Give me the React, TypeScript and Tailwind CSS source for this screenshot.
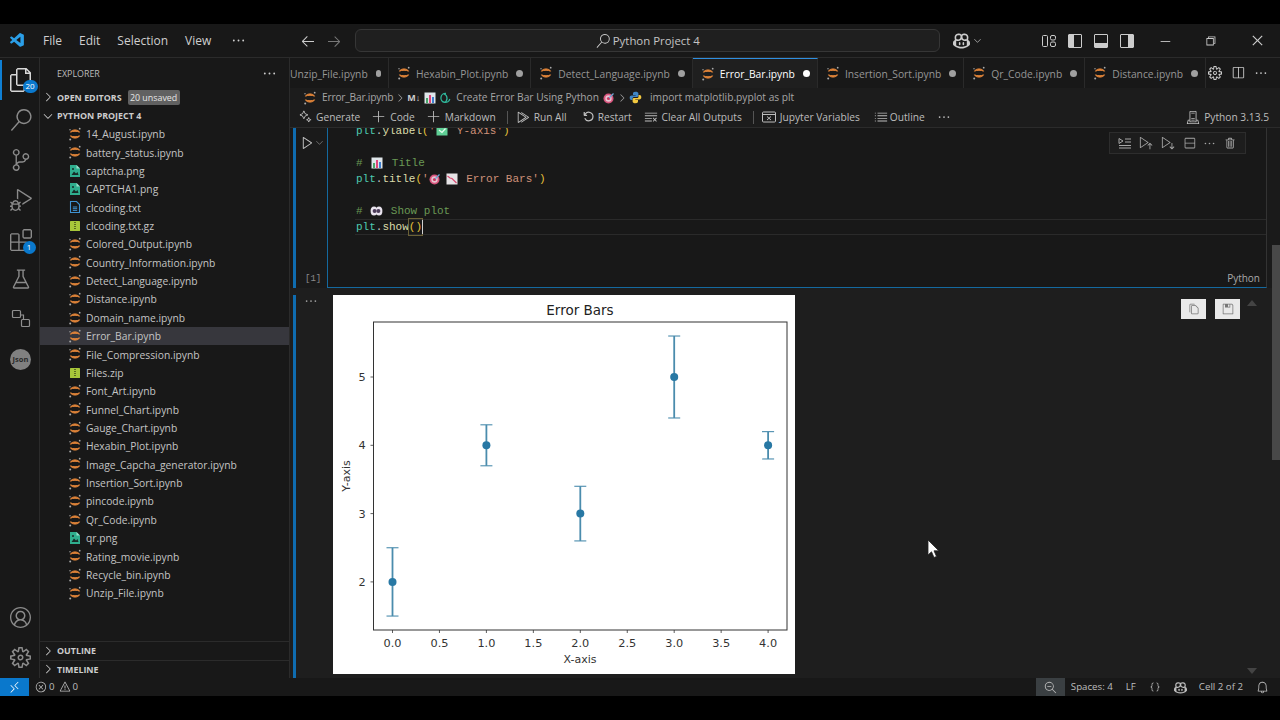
import type { ReactNode } from "react";
import {
  VscAccount, VscAdd, VscArrowLeft, VscArrowRight, VscBeaker, VscBell, VscChevronDown, VscChevronRight,
  VscChromeClose, VscChromeMinimize, VscChromeRestore, VscClearAll, VscCopilot, VscCopy, VscDebugAlt,
  VscDebugRestart, VscEllipsis, VscError, VscExtensions, VscFiles, VscJson, VscLayoutPanel, VscLayoutSidebarLeft,
  VscLayoutSidebarRight, VscListUnordered, VscPlay, VscRemote, VscRunAbove, VscRunAll, VscRunBelow,
  VscSave, VscSearch, VscServerEnvironment, VscSettingsGear, VscSourceControl, VscSparkle, VscSplitHorizontal,
  VscSplitVertical, VscTrash, VscVscode, VscWarning, VscZoomOut,
} from "react-icons/vsc";

const ui = "font-['Open_Sans',sans-serif]";

const NotebookIcon = ({ size = 14 }: { size?: number }) => (
  <svg width={size} height={size} viewBox="0 0 14 14" className="shrink-0">
    <path d="M2.5 5.2C3.8 2.2 10.2 2.2 11.5 5.2C9.5 3.9 4.5 3.9 2.5 5.2Z" fill="#e8883a" stroke="#e8883a" />
    <path d="M2.5 8.8C3.8 11.8 10.2 11.8 11.5 8.8C9.5 10.1 4.5 10.1 2.5 8.8Z" fill="#e8883a" stroke="#e8883a" />
    <circle cx="11.7" cy="1.7" r="0.9" fill="#a9a9a9" />
    <circle cx="2" cy="2.8" r="0.7" fill="#a9a9a9" />
    <circle cx="2.2" cy="12.4" r="1" fill="#a9a9a9" />
  </svg>
);

const PngIcon = () => (
  <svg width={14} height={14} viewBox="0 0 14 14" className="shrink-0">
    <path d="M2 1H8.5L12 4.5V13H2Z" fill="#2fae8e" />
    <path d="M8.5 1V4.5H12Z" fill="#9adfca" />
    <path d="M3.5 11L6 7.5L8 9.5L9.5 8L10.5 11Z" fill="#172b27" />
    <circle cx="5" cy="5" r="1" fill="#172b27" />
  </svg>
);

const TxtIcon = () => (
  <svg width={14} height={14} viewBox="0 0 14 14" className="shrink-0" fill="none">
    <path d="M2.5 1.5H8.5L11.5 4.5V12.5H2.5Z" stroke="#3f92d2" strokeWidth="1.1" />
    <path d="M4.8 7H9.2M4.8 8.7H9.2M4.8 10.4H9.2" stroke="#3f92d2" />
  </svg>
);

const ZipIcon = () => (
  <svg width={14} height={14} viewBox="0 0 14 14" className="shrink-0">
    <rect x="2" y="2" width="10" height="10" rx="0.6" fill="#a8c73a" />
    <path d="M7 3V4M7 5V6M7 7V8M7 9V10" stroke="#2a3010" strokeWidth="1.2" />
  </svg>
);

const ChartEmoji = () => (
  <svg width={12} height={12} viewBox="0 0 12 12" className="shrink-0">
    <rect x="0.5" y="0.5" width="11" height="11" fill="#dfe6ea" />
    <rect x="2" y="6" width="2" height="5" fill="#4aa56a" />
    <rect x="5" y="3" width="2" height="8" fill="#e0457b" />
    <rect x="8" y="5" width="2" height="6" fill="#3f7fd0" />
  </svg>
);

const TargetEmoji = () => (
  <svg width={12} height={12} viewBox="0 0 12 12" className="shrink-0">
    <circle cx="5.5" cy="6.5" r="5" fill="#d9557e" />
    <circle cx="5.5" cy="6.5" r="3.2" fill="#e8c3cf" />
    <circle cx="5.5" cy="6.5" r="1.6" fill="#c8365f" />
    <path d="M6 6L10.5 1.5" stroke="#6fa7d6" strokeWidth="1.2" />
  </svg>
);

const TrendEmoji = () => (
  <svg width={12} height={12} viewBox="0 0 12 12" className="shrink-0">
    <rect x="0.5" y="0.5" width="11" height="11" fill="#e6e3e6" />
    <path d="M1.5 3L4 5L6 5.5L10.5 10" stroke="#d8486f" strokeWidth="1.2" fill="none" />
  </svg>
);

const EyesEmoji = () => (
  <svg width={13} height={12} viewBox="0 0 13 12" className="shrink-0">
    <ellipse cx="4" cy="6" rx="3.4" ry="4.6" fill="#e9e3ee" />
    <ellipse cx="9" cy="6" rx="3.4" ry="4.6" fill="#e9e3ee" />
    <circle cx="4.6" cy="6" r="2" fill="#4c3c5a" />
    <circle cx="8.4" cy="6" r="2" fill="#4c3c5a" />
  </svg>
);

const CheckEmoji = () => (
  <svg width={12} height={12} viewBox="0 0 12 12" className="shrink-0">
    <rect x="0.5" y="1.5" width="11" height="9" fill="#5fcf95" />
    <path d="M3 5L6 7.5L9.5 3.5" stroke="#e8fff2" strokeWidth="1.2" fill="none" />
  </svg>
);

const SwirlIcon = () => (
  <svg width={12} height={12} viewBox="0 0 12 12" className="shrink-0" fill="none">
    <path d="M7 1.5A4.5 4.5 0 1 0 10.8 7M5 10.5A4.5 4.5 0 0 0 5 2" stroke="#2fb59a" strokeWidth="1.3" />
  </svg>
);

const PythonIcon = () => (
  <svg width={13} height={13} viewBox="0 0 13 13" className="shrink-0">
    <path d="M6.5 0.8C4 0.8 4 1.8 4 3V4H6.7V4.6H2.7C1.4 4.6 0.7 5.4 0.7 6.8C0.7 8.2 1.4 9 2.5 9H3.5V7.6C3.5 6.6 4.3 6 5.2 6H8C8.8 6 9.4 5.4 9.4 4.6V2.6C9.4 1.4 8.2 0.8 6.5 0.8Z" fill="#3f86c6" />
    <path d="M6.5 12.2C9 12.2 9 11.2 9 10V9H6.3V8.4H10.3C11.6 8.4 12.3 7.6 12.3 6.2C12.3 4.8 11.6 4 10.5 4H9.5V5.4C9.5 6.4 8.7 7 7.8 7H5C4.2 7 3.6 7.6 3.6 8.4V10.4C3.6 11.6 4.8 12.2 6.5 12.2Z" fill="#f2c83f" />
  </svg>
);

const PipelineIcon = () => (
  <svg width={22} height={22} viewBox="0 0 22 22" fill="none" stroke="#8f8f8f" strokeWidth="1.2">
    <rect x="2.5" y="2.5" width="8" height="7" rx="1" />
    <rect x="11.5" y="11.5" width="8" height="7" rx="1" />
    <path d="M10.5 7H13.5V11.5" />
  </svg>
);

const LayoutIcon = () => (
  <svg width={16} height={16} viewBox="0 0 16 16" fill="none" stroke="#cccccc" strokeWidth="1">
    <rect x="1.5" y="2.5" width="5" height="11" rx="1" />
    <rect x="9.5" y="2.5" width="5" height="4.5" rx="1.5" />
    <rect x="9.5" y="9" width="5" height="4.5" rx="1.5" />
  </svg>
);

const VariablesIcon = () => (
  <svg width={14} height={14} viewBox="0 0 14 14" fill="none" stroke="#bdbdbd">
    <rect x="0.5" y="2" width="13" height="10" rx="1" />
    <path d="M0.5 4.5H13.5" />
    <path d="M5 6.5L9 10M9 6.5L5 10" />
  </svg>
);

const ExecuteIcon = () => (
  <svg width={14} height={14} viewBox="0 0 14 14" fill="none" stroke="#a8a8a8">
    <path d="M1 2.5L5 5L1 7.5Z" />
    <path d="M7 3H13M7 6H13M1 9.5H13M1 12H13" />
  </svg>
);

const files: [string, "nb" | "png" | "txt" | "zip"][] = [
  ["14_August.ipynb", "nb"], ["battery_status.ipynb", "nb"], ["captcha.png", "png"], ["CAPTCHA1.png", "png"],
  ["clcoding.txt", "txt"], ["clcoding.txt.gz", "zip"], ["Colored_Output.ipynb", "nb"], ["Country_Information.ipynb", "nb"],
  ["Detect_Language.ipynb", "nb"], ["Distance.ipynb", "nb"], ["Domain_name.ipynb", "nb"], ["Error_Bar.ipynb", "nb"],
  ["File_Compression.ipynb", "nb"], ["Files.zip", "zip"], ["Font_Art.ipynb", "nb"], ["Funnel_Chart.ipynb", "nb"],
  ["Gauge_Chart.ipynb", "nb"], ["Hexabin_Plot.ipynb", "nb"], ["Image_Capcha_generator.ipynb", "nb"], ["Insertion_Sort.ipynb", "nb"],
  ["pincode.ipynb", "nb"], ["Qr_Code.ipynb", "nb"], ["qr.png", "png"], ["Rating_movie.ipynb", "nb"],
  ["Recycle_bin.ipynb", "nb"], ["Unzip_File.ipynb", "nb"],
];

const tabs = ["Hexabin_Plot.ipynb", "Detect_Language.ipynb", "Error_Bar.ipynb", "Insertion_Sort.ipynb", "Qr_Code.ipynb", "Distance.ipynb"];

const Activity = ({ children, active }: { children: ReactNode; active?: boolean }) => (
  <div className={`h-[39.9px] flex items-center justify-center text-[#8b8b8b] border-l-2 ${active ? "border-[#0f7fd4] text-[#d7d7d7]" : "border-transparent"}`}>
    {children}
  </div>
);

const Sidebar = () => (
  <aside className="w-[250px] shrink-0 flex flex-col bg-[#181818] border-r border-[#2b2b2b]">
    <div className="h-[30px] flex items-center justify-between pl-[17px] pr-[12px] text-[8.9px] text-[#bbbbbb]">
      <span className="pt-[2px]">EXPLORER</span>
      <VscEllipsis size={15} className="text-[#cccccc]" />
    </div>
    <div className="h-[18.4px] flex items-center pl-[1px] text-[8.9px] font-bold text-[#cccccc]">
      <VscChevronRight size={14} />
      <span className="ml-[2px]">OPEN EDITORS</span>
      <span className="ml-[6px] h-[15px] w-[52px] bg-[#616161] rounded-[2px] flex items-center justify-center font-normal text-[#e6e6e6] text-[8.9px]">20 unsaved</span>
    </div>
    <div className="h-[18.4px] flex items-center pl-[1px] text-[8.9px] font-bold text-[#cccccc]">
      <VscChevronDown size={14} />
      <span className="ml-[2px]">PYTHON PROJECT 4</span>
    </div>
    <div className="flex-1">
      {files.map(([name, kind]) => (
        <div key={name} className={`h-[18.36px] flex items-center pl-[28px] gap-[4px] text-[10.3px] text-[#c4c4c4] ${name === "Error_Bar.ipynb" ? "bg-[#37373d]" : ""}`}>
          {kind === "nb" && <NotebookIcon />}
          {kind === "png" && <PngIcon />}
          {kind === "txt" && <TxtIcon />}
          {kind === "zip" && <ZipIcon />}
          <span className="pt-[2px]">{name}</span>
        </div>
      ))}
    </div>
    <div className="h-[18.5px] flex items-center pl-[1px] text-[8.9px] font-bold text-[#cccccc] border-t border-[#2b2b2b]">
      <VscChevronRight size={14} />
      <span className="ml-[2px]">OUTLINE</span>
    </div>
    <div className="h-[18.5px] flex items-center pl-[1px] text-[8.9px] font-bold text-[#cccccc] border-t border-[#2b2b2b]">
      <VscChevronRight size={14} />
      <span className="ml-[2px]">TIMELINE</span>
    </div>
  </aside>
);

const TabBar = () => (
  <div className="h-[30px] shrink-0 flex items-stretch bg-[#181818] text-[10.3px] overflow-hidden">
    <div className="w-[99px] shrink-0 flex items-center justify-end gap-[8px] pr-[7px] text-[#969696] border-r border-[#2a2a2a]">
      <span className="pt-[3px]">Unzip_File.ipynb</span>
      <span className="w-[7px] h-[7px] rounded-full bg-[#a0a0a0]" />
    </div>
    {tabs.map((t) => {
      const active = t === "Error_Bar.ipynb";
      return (
        <div key={t} className={`flex items-center pl-[8px] pr-[7px] gap-[5px] border-r border-[#2a2a2a] ${active ? "bg-[#1f1f1f] text-white border-t border-t-[#2f8fe0]" : "text-[#969696]"}`}>
          <NotebookIcon />
          <span className="pt-[3px]">{t}</span>
          <span className={`ml-[3px] w-[7px] h-[7px] rounded-full ${active ? "bg-white" : "bg-[#a0a0a0]"}`} />
        </div>
      );
    })}
    <div className="ml-auto flex items-center gap-[9px] pr-[12px] text-[#cccccc]">
      <VscSettingsGear size={14} />
      <VscSplitHorizontal size={14} />
      <VscEllipsis size={14} />
    </div>
  </div>
);

const Breadcrumbs = () => (
  <div className="h-[19px] shrink-0 flex items-center pl-[13px] text-[10.2px] text-[#a6a6a6] bg-[#1c1c1c]">
    <NotebookIcon />
    <span className="ml-[5px] tracking-[-0.2px]">Error_Bar.ipynb</span>
    <VscChevronRight size={12} className="mx-[1px]" />
    <span className="text-[9px] font-bold text-[#cccccc] mr-[4px]">M↓</span>
    <ChartEmoji />
    <span className="w-[3px]" />
    <SwirlIcon />
    <span className="ml-[5px]">Create Error Bar Using Python</span>
    <span className="w-[4px]" />
    <TargetEmoji />
    <VscChevronRight size={12} className="mx-[1px]" />
    <PythonIcon />
    <span className="ml-[8px]">import matplotlib.pyplot as plt</span>
  </div>
);

const Tool = ({ icon, label, gap = "gap-[4px]" }: { icon: ReactNode; label: string; gap?: string }) => (
  <div className={`flex items-center ${gap}`}>
    {icon}
    <span className="pt-[2px]">{label}</span>
  </div>
);

const Toolbar = () => (
  <div className="h-[21px] shrink-0 flex items-center pl-[9px] pr-[11px] text-[10.2px] text-[#bdbdbd] bg-[#1c1c1c] border-b border-[#2b2b2b]">
    <Tool icon={<VscSparkle size={13} />} label="Generate" />
    <div className="w-[12px]" />
    <Tool icon={<VscAdd size={14} />} label="Code" />
    <div className="w-[12px]" />
    <Tool icon={<VscAdd size={14} />} label="Markdown" />
    <div className="w-px h-[13px] bg-[#555] ml-[11px] mr-[8px]" />
    <Tool icon={<VscRunAll size={14} />} label="Run All" />
    <div className="w-[15px]" />
    <Tool icon={<VscDebugRestart size={13} />} label="Restart" gap="gap-[3px]" />
    <div className="w-[12px]" />
    <Tool icon={<VscClearAll size={14} />} label="Clear All Outputs" />
    <div className="w-px h-[13px] bg-[#555] ml-[11px] mr-[8px]" />
    <Tool icon={<VariablesIcon />} label="Jupyter Variables" />
    <div className="w-[14px]" />
    <Tool icon={<VscListUnordered size={14} />} label="Outline" gap="gap-[2px]" />
    <VscEllipsis size={14} className="ml-[12px]" />
    <div className="ml-auto flex items-center gap-[4px]">
      <VscServerEnvironment size={14} />
      <span className="pt-[2px]">Python 3.13.5</span>
    </div>
  </div>
);

const CodeCell = () => (
  <div className="h-[160px] shrink-0 flex bg-[#1a1a1a]">
    <div className="w-[3px] ml-[3px] shrink-0 bg-[#0f6cb0]" />
    <div className="w-[31px] shrink-0 relative text-[#8a8a8a]">
      <VscPlay size={15} className="absolute left-[4px] top-[7px] text-[#c5c5c5]" />
      <VscChevronDown size={11} className="absolute left-[18px] top-[9px]" />
      <span className="absolute left-[9px] bottom-[2px] font-['Liberation_Mono',monospace] text-[9px]">[1]</span>
    </div>
    <div className="w-[940px] shrink-0 bg-[#181818] border-l border-b border-r border-l-[#14699f] border-b-[#14699f] border-r-[#333] relative overflow-hidden font-['Liberation_Mono',monospace] text-[11px] leading-[16px] pl-[28px] whitespace-pre">
      <div className="-mt-[5px]">
        <div className="h-[16px] flex items-center">
          <span className="text-[#4ec9b0]">plt</span><span className="text-[#c8c8c8]">.</span><span className="text-[#dcdcaa]">ylabel</span><span className="text-[#e5c33b]">(</span><span className="text-[#ce9178]">'</span><span className="ml-[1px]"><CheckEmoji /></span><span className="text-[#ce9178] pl-[2px]"> Y-axis'</span><span className="text-[#e5c33b]">)</span>
        </div>
        <div className="h-[16px]" />
        <div className="h-[16px] flex items-center text-[#6a9955]">
          <span># </span><span className="ml-[2px]"><ChartEmoji /></span><span className="pl-[2px]"> Title</span>
        </div>
        <div className="h-[16px] flex items-center">
          <span className="text-[#4ec9b0]">plt</span><span className="text-[#c8c8c8]">.</span><span className="text-[#dcdcaa]">title</span><span className="text-[#e5c33b]">(</span><span className="text-[#ce9178]">'</span><TargetEmoji /><span className="w-[5px]" /><TrendEmoji /><span className="text-[#ce9178] pl-[2px]"> Error Bars'</span><span className="text-[#e5c33b]">)</span>
        </div>
        <div className="h-[16px]" />
        <div className="h-[16px] flex items-center text-[#6a9955]">
          <span># </span><span className="ml-[1px]"><EyesEmoji /></span><span className="pl-[1px]"> Show plot</span>
        </div>
        <div className="h-[16px] flex items-center border-y border-[#2a2a2a] -ml-px">
          <span className="text-[#4ec9b0] pl-px">plt</span><span className="text-[#c8c8c8]">.</span><span className="text-[#dcdcaa]">show</span><span className="text-[#e5c33b] outline outline-[#6b6136]">()</span><span className="w-px h-[14px] bg-[#d0d0d0]" />
        </div>
      </div>
      <span className="absolute right-[6px] bottom-[1px] text-[10px] text-[#a9a9a9] font-['Open_Sans',sans-serif]">Python</span>
      <div className="absolute left-[781px] top-[4px] w-[137px] h-[22px] flex items-center justify-around px-[4px] bg-[#1d1d1d] border border-[#2d2d2d] text-[#a8a8a8]">
        <ExecuteIcon />
        <VscRunAbove size={14} />
        <VscRunBelow size={14} />
        <VscSplitVertical size={13} />
        <VscEllipsis size={13} />
        <VscTrash size={13} />
      </div>
    </div>
  </div>
);

const pts = [[0, 2, 1.5, 2.5], [1, 4, 3.7, 4.3], [2, 3, 2.6, 3.4], [3, 5, 4.4, 5.6], [4, 4, 3.8, 4.2]];
const px = (v: number) => 59.5 + v * 93.9;
const py = (v: number) => 82 + (5 - v) * 68.3;

const ErrorChart = () => (
  <svg width={462} height={379} viewBox="0 0 462 379" className="block bg-white shrink-0">
    <text x="247" y="20" textAnchor="middle" fontFamily="DejaVu Sans" fontSize="13.5" fill="#222">Error Bars</text>
    <rect x="40.5" y="27" width="413.5" height="308" fill="none" stroke="#333" strokeWidth="1" />
    {[0, 0.5, 1, 1.5, 2, 2.5, 3, 3.5, 4].map((v) => (
      <g key={v}>
        <line x1={px(v)} x2={px(v)} y1="335" y2="338" stroke="#333" strokeWidth="0.8" />
        <text x={px(v)} y="352" textAnchor="middle" fontFamily="DejaVu Sans" fontSize="11.3" fill="#333">{v.toFixed(1)}</text>
      </g>
    ))}
    {[2, 3, 4, 5].map((v) => (
      <g key={v}>
        <line x1="37.5" x2="40.5" y1={py(v)} y2={py(v)} stroke="#333" strokeWidth="0.8" />
        <text x="29" y={py(v) + 4} textAnchor="middle" fontFamily="DejaVu Sans" fontSize="11.3" fill="#333">{v}</text>
      </g>
    ))}
    <text x="247" y="368" textAnchor="middle" fontFamily="DejaVu Sans" fontSize="11" fill="#333">X-axis</text>
    <text x="17" y="181" textAnchor="middle" fontFamily="DejaVu Sans" fontSize="11" fill="#333" transform="rotate(-90 17 181)">Y-axis</text>
    {pts.map(([x, y, lo, hi]) => (
      <g key={x} stroke="#4a8cad" fill="none">
        <line x1={px(x)} x2={px(x)} y1={py(lo)} y2={py(hi)} strokeWidth="1.8" />
        <line x1={px(x) - 6} x2={px(x) + 6} y1={py(lo)} y2={py(lo)} strokeWidth="1.1" />
        <line x1={px(x) - 6} x2={px(x) + 6} y1={py(hi)} y2={py(hi)} strokeWidth="1.1" />
        <circle cx={px(x)} cy={py(y)} r="4" fill="#2878a4" stroke="none" />
      </g>
    ))}
  </svg>
);

const OutputCell = () => (
  <div className="flex-1 min-h-0 flex relative mt-[7px]">
    <div className="w-[3px] ml-[3px] shrink-0 bg-[#0f6cb0]" />
    <div className="w-[37px] shrink-0 pl-[8px] -mt-[1px] text-[#a0a0a0]">
      <VscEllipsis size={14} />
    </div>
    <div className="h-[379px] overflow-visible"><ErrorChart /></div>
    <div className="absolute left-[891px] top-[4px] w-[25px] h-[20px] bg-[#e9e9e9] flex items-center justify-center text-[#777]"><VscCopy size={12} /></div>
    <div className="absolute left-[925px] top-[4px] w-[25px] h-[20px] bg-[#e9e9e9] flex items-center justify-center text-[#777]"><VscSave size={12} /></div>
    <div className="absolute left-[957px] top-[5px] w-0 h-0 border-x-[5px] border-x-transparent border-b-[6px] border-b-[#444]" />
    <div className="absolute left-[957px] bottom-[4px] w-0 h-0 border-x-[5px] border-x-transparent border-t-[6px] border-t-[#444]" />
  </div>
);

const StatusBar = () => (
  <footer className="h-[18px] shrink-0 flex items-stretch bg-[#181818] text-[9.7px] text-[#bdbdbd]">
    <div className="w-[29px] bg-[#0a78cc] flex items-center justify-center text-white"><VscRemote size={13} /></div>
    <div className="flex items-center ml-[6px] gap-[2px]">
      <VscError size={12} /><span>0</span><VscWarning size={12} className="ml-[2px]" /><span>0</span>
    </div>
    <div className="ml-auto w-[29px] bg-[#3a3f42] flex items-center justify-center"><VscZoomOut size={13} /></div>
    <span className="ml-[6px] flex items-center">Spaces: 4</span>
    <span className="ml-[13px] flex items-center">LF</span>
    <span className="ml-[13px] flex items-center"><VscJson size={12} /></span>
    <span className="ml-[13px] flex items-center"><VscCopilot size={13} /></span>
    <span className="ml-[12px] flex items-center">Cell 2 of 2</span>
    <span className="ml-[13px] mr-[11px] flex items-center"><VscBell size={13} /></span>
  </footer>
);

const Cursor = () => (
  <svg width={14} height={20} viewBox="0 0 14 20" className="absolute left-[926px] top-[539px]">
    <path d="M2 1V16L5.5 12.8L8 18.5L10.5 17.4L8 11.8H12.8Z" fill="#fff" stroke="#222" strokeWidth="0.8" />
  </svg>
);

export default function App() {
  return (
    <div className={`${ui} relative h-screen w-screen overflow-hidden bg-black flex flex-col py-[24px] text-[#cccccc]`}>
      {/* title bar */}
      <header className="h-[34px] shrink-0 flex items-center bg-[#181818] border-b border-[#2b2b2b] text-[12px]">
        <VscVscode size={17} className="ml-[9px] text-[#2b9fe8]" />
        <nav className="flex items-center gap-[17px] ml-[17px] text-[#cfcfcf]">
          <span>File</span><span>Edit</span><span>Selection</span><span>View</span>
          <VscEllipsis size={15} className="ml-[3px]" />
        </nav>
        <VscArrowLeft size={16} className="ml-[54px]" />
        <VscArrowRight size={16} className="ml-[10px] text-[#777]" />
        <div className="ml-[13px] w-[585px] h-[23px] rounded-[6px] bg-[#1f1f1f] border border-[#363636] flex items-center justify-center gap-[3px]">
          <VscSearch size={14} />
          <span className="text-[#c4c4c4] text-[11.4px]">Python Project 4</span>
        </div>
        <VscCopilot size={17} className="ml-[13px]" />
        <VscChevronDown size={11} className="ml-[2px]" />
        <div className="ml-[58px] flex items-center gap-[10px]">
          <LayoutIcon />
          <VscLayoutSidebarLeft size={16} />
          <VscLayoutPanel size={16} />
          <VscLayoutSidebarRight size={16} />
        </div>
        <VscChromeMinimize size={14} className="ml-[23px]" />
        <VscChromeRestore size={13} className="ml-[32px]" />
        <VscChromeClose size={15} className="ml-[33px]" />
      </header>

      <div className="flex-1 min-h-0 flex">
        {/* activity bar */}
        <div className="w-[40px] shrink-0 bg-[#181818] border-r border-[#2b2b2b] flex flex-col pt-[2px] pb-[1px]">
          <Activity active>
            <span className="relative">
              <VscFiles size={24} />
              <span className="absolute -right-[5px] -bottom-[1px] w-[15px] h-[13px] rounded-full bg-[#0a78cc] text-white text-[8px] flex items-center justify-center">20</span>
            </span>
          </Activity>
          <Activity><VscSearch size={22} /></Activity>
          <Activity><VscSourceControl size={22} /></Activity>
          <Activity><VscDebugAlt size={22} /></Activity>
          <Activity>
            <span className="relative">
              <VscExtensions size={22} />
              <span className="absolute -right-[4px] -bottom-[3px] w-[13px] h-[13px] rounded-full bg-[#0a78cc] text-white text-[8px] flex items-center justify-center">1</span>
            </span>
          </Activity>
          <Activity><VscBeaker size={22} /></Activity>
          <Activity><PipelineIcon /></Activity>
          <Activity>
            <span className="w-[21px] h-[21px] rounded-full bg-[#808080] text-[#2a2a2a] text-[7.5px] font-bold flex items-center justify-center">Json</span>
          </Activity>
          <div className="mt-auto" />
          <Activity><VscAccount size={21} /></Activity>
          <Activity><VscSettingsGear size={21} /></Activity>
        </div>

        <Sidebar />

        <main className="flex-1 min-w-0 flex flex-col bg-[#1e1e1e] relative overflow-hidden">
          <TabBar />
          <Breadcrumbs />
          <Toolbar />
          <CodeCell />
          <OutputCell />
          <div className="absolute right-0 top-[187px] w-[8px] h-[215px] bg-[#484848]" />
        </main>
      </div>

      <StatusBar />
      <Cursor />
    </div>
  );
}
